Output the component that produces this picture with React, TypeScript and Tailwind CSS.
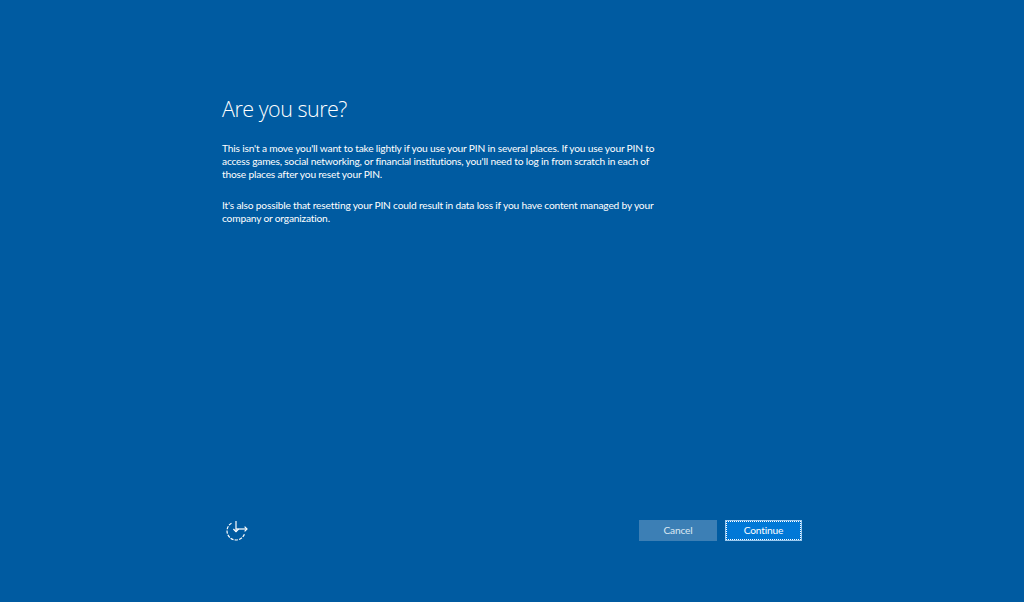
import React from 'react';

function AccessIcon() {
  return (
    <svg width="24" height="22" viewBox="0 0 24 22" fill="none" stroke="#fff" strokeWidth="1.2">
      <path d="M6.5 4.2 A9 9 0 1 0 19.5 15" strokeDasharray="3.2 1.2" />
      <path d="M11 2v10.5" />
      <path d="M8.4 10l2.6 2.6 2.6-2.6" />
      <path d="M11 10h11" />
      <path d="M19.6 7.6l2.4 2.4-2.4 2.4" />
    </svg>
  );
}

export default function App() {
  return (
    <div className="h-[602px] w-[1024px] overflow-hidden bg-[#005ba1] text-white font-['Open_Sans',sans-serif] flex flex-col pl-[222px] pt-[94px] pb-[61px]">
      <h1 className="text-[21.5px] leading-[30px] font-light tracking-[-0.5px]">Are you sure?</h1>

      <div className="mt-[18px] w-[440px] font-['Lato',sans-serif] text-[10.2px] tracking-[-0.18px] leading-[13px] flex flex-col gap-[18px]">
        <p>
          This isn't a move you'll want to take lightly if you use your PIN in several places. If you use your PIN to
          access games, social networking, or financial institutions, you'll need to log in from scratch in each of
          those places after you reset your PIN.
        </p>
        <p>
          It's also possible that resetting your PIN could result in data loss if you have content managed by your
          company or organization.
        </p>
      </div>

      <div className="mt-auto flex items-center justify-between w-[580px]">
        <div className="pl-[3px]">
          <AccessIcon />
        </div>
        <div className="flex gap-[8px]">
          <button className="w-[78px] h-[21px] pt-[1px] bg-[#3c7fb5] font-['Lato',sans-serif] text-[10.2px] tracking-[-0.18px] text-[#dbe8f3]">Cancel</button>
          <button className="w-[77px] h-[21px] pt-[1px] bg-[#0078d7] font-['Lato',sans-serif] text-[10.2px] tracking-[-0.18px] border border-[#9cc9ee] [outline:1px_dotted_#ffffff] [outline-offset:-2px]">Continue</button>
        </div>
      </div>
    </div>
  );
}
